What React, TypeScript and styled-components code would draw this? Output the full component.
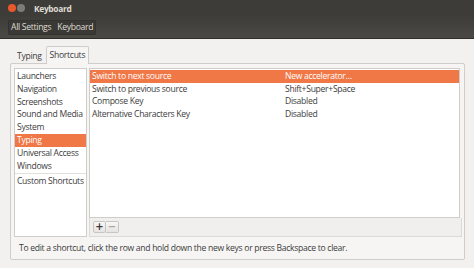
import styled, { createGlobalStyle } from 'styled-components'

const GlobalStyle = createGlobalStyle`
  html, body {
    margin: 0;
    padding: 0;
    background: #f2f1f0;
  }
  body {
    font-family: 'Open Sans', 'Noto Sans', sans-serif;
    font-size: 8.6px;
    letter-spacing: -0.3px;
    color: #3c3c3c;
  }
  button {
    letter-spacing: 0;
  }
`

const categories = [
  'Launchers',
  'Navigation',
  'Screenshots',
  'Sound and Media',
  'System',
  'Typing',
  'Universal Access',
  'Windows',
]

const shortcuts = [
  { name: 'Switch to next source', accel: 'New accelerator…' },
  { name: 'Switch to previous source', accel: 'Shift+Super+Space' },
  { name: 'Compose Key', accel: 'Disabled' },
  { name: 'Alternative Characters Key', accel: 'Disabled' },
]

export default function App() {
  return (
    <>
      <GlobalStyle />
      <Window>
        <TitleBar>
          <WinButton $color="#e9572b" />
          <WinButton $color="#7d7c77" />
          <Title>Keyboard</Title>
        </TitleBar>
        <Toolbar>
          <Crumbs>
            <Crumb>All Settings</Crumb>
            <Crumb>Keyboard</Crumb>
          </Crumbs>
        </Toolbar>
        <Content>
          <Tabs>
            <Tab>Typing</Tab>
            <Tab $active>Shortcuts</Tab>
          </Tabs>
          <Notebook>
            <Panes>
              <CategoryList>
                {categories.map((c) => (
                  <CategoryRow key={c} $selected={c === 'Typing'}>
                    {c}
                  </CategoryRow>
                ))}
                <Separator />
                <CategoryRow>Custom Shortcuts</CategoryRow>
              </CategoryList>
              <RightPane>
                <ShortcutTree>
                  {shortcuts.map((s, i) => (
                    <ShortcutRow key={s.name} $selected={i === 0}>
                      <NameCell>{s.name}</NameCell>
                      <AccelCell>{s.accel}</AccelCell>
                    </ShortcutRow>
                  ))}
                </ShortcutTree>
                <TreeToolbar>
                  <SmallButton>+</SmallButton>
                  <SmallButton $dim>−</SmallButton>
                </TreeToolbar>
              </RightPane>
            </Panes>
            <Help>
              To edit a shortcut, click the row and hold down the new keys or
              press Backspace to clear.
            </Help>
          </Notebook>
        </Content>
      </Window>
    </>
  )
}

const Window = styled.div`
  width: 474px;
  height: 268px;
  overflow: hidden;
  display: flex;
  flex-direction: column;
  background: #f2f1f0;
`

const TitleBar = styled.div`
  height: 16px;
  display: flex;
  align-items: center;
  padding-left: 8px;
  gap: 1px;
  background: #3d3c38;
`

const WinButton = styled.span<{ $color: string }>`
  width: 8px;
  height: 8px;
  border-radius: 50%;
  background: ${(p) => p.$color};
`

const Title = styled.span`
  margin-left: 8px;
  font-weight: bold;
  color: #dfdbd2;
  font-size: 8.4px;
`

const Toolbar = styled.div`
  height: 22px;
  display: flex;
  align-items: center;
  padding-left: 8px;
  background: linear-gradient(#3e3d39, #4a4944);
  border-bottom: 1px solid #2f2e2b;
`

const Crumbs = styled.div`
  display: flex;
  height: 15px;
  border-radius: 2px;
  background: #3a3935;
  box-shadow: inset 0 0 0 1px #34332f;
`

const Crumb = styled.span`
  display: flex;
  align-items: center;
  padding: 0 3px;
  color: #dfdbd2;
  font-size: 8.6px;
`

const Content = styled.div`
  flex: 1;
  display: flex;
  flex-direction: column;
  padding: 6px 9px 8px 10px;
  min-height: 0;
`

const Tabs = styled.div`
  display: flex;
  align-items: flex-end;
  padding-left: 3px;
  height: 18px;
`

const Tab = styled.div<{ $active?: boolean }>`
  padding: 0 3px;
  height: ${(p) => (p.$active ? 17 : 15)}px;
  line-height: ${(p) => (p.$active ? 17 : 15)}px;
  color: #3c3c3c;
  background: ${(p) => (p.$active ? '#f6f5f4' : 'transparent')};
  border: 1px solid ${(p) => (p.$active ? '#cfcdca' : 'transparent')};
  border-bottom: none;
  border-radius: 2px 2px 0 0;
  margin-bottom: -1px;
  position: relative;
  z-index: 1;
`

const Notebook = styled.div`
  flex: 1;
  display: flex;
  flex-direction: column;
  background: #f6f5f4;
  border: 1px solid #cfcdca;
  border-radius: 2px;
  padding: 4px 2px 0 3px;
`

const Panes = styled.div`
  height: 169px;
  display: flex;
  gap: 2px;
`

const CategoryList = styled.div`
  width: 71px;
  background: #ffffff;
  border: 1px solid #cfcdca;
  padding-top: 1px;
`

const CategoryRow = styled.div<{ $selected?: boolean }>`
  height: 12.8px;
  line-height: 12.8px;
  padding-left: 2px;
  white-space: nowrap;
  color: ${(p) => (p.$selected ? '#ffffff' : '#3c3c3c')};
  background: ${(p) => (p.$selected ? '#f07746' : 'transparent')};
`

const Separator = styled.div`
  height: 1px;
  margin: 0.6px 0;
  background: #e2e0dd;
`

const RightPane = styled.div`
  flex: 1;
  display: flex;
  flex-direction: column;
`

const ShortcutTree = styled.div`
  flex: 1;
  background: #ffffff;
  border: 1px solid #cfcdca;
  padding-top: 1px;
  margin-right: 2px;
`

const ShortcutRow = styled.div<{ $selected?: boolean }>`
  display: flex;
  height: 12.5px;
  line-height: 12.5px;
  color: ${(p) => (p.$selected ? '#ffffff' : '#3c3c3c')};
  background: ${(p) => (p.$selected ? '#f07746' : 'transparent')};
`

const NameCell = styled.span`
  width: 193px;
  padding-left: 2px;
  white-space: nowrap;
`

const AccelCell = styled.span`
  white-space: nowrap;
`

const TreeToolbar = styled.div`
  height: 18px;
  display: flex;
  align-items: center;
  padding-left: 3px;
  background: #f0efee;
  border: 1px solid #dcdad7;
  border-top: none;
`

const SmallButton = styled.button<{ $dim?: boolean }>`
  width: 13px;
  height: 12px;
  padding: 0;
  margin: 0;
  font: bold 10px 'DejaVu Sans', sans-serif;
  line-height: 10px;
  color: ${(p) => (p.$dim ? '#a9a7a3' : '#3c3c3c')};
  background: linear-gradient(#f8f7f6, #e6e4e1);
  border: 1px solid #c8c6c2;
  border-radius: 2px;
  & + & {
    border-left: none;
    border-radius: 0 2px 2px 0;
  }
`

const Help = styled.div`
  flex: 1;
  display: flex;
  align-items: center;
  padding-left: 5px;
  white-space: nowrap;
`
